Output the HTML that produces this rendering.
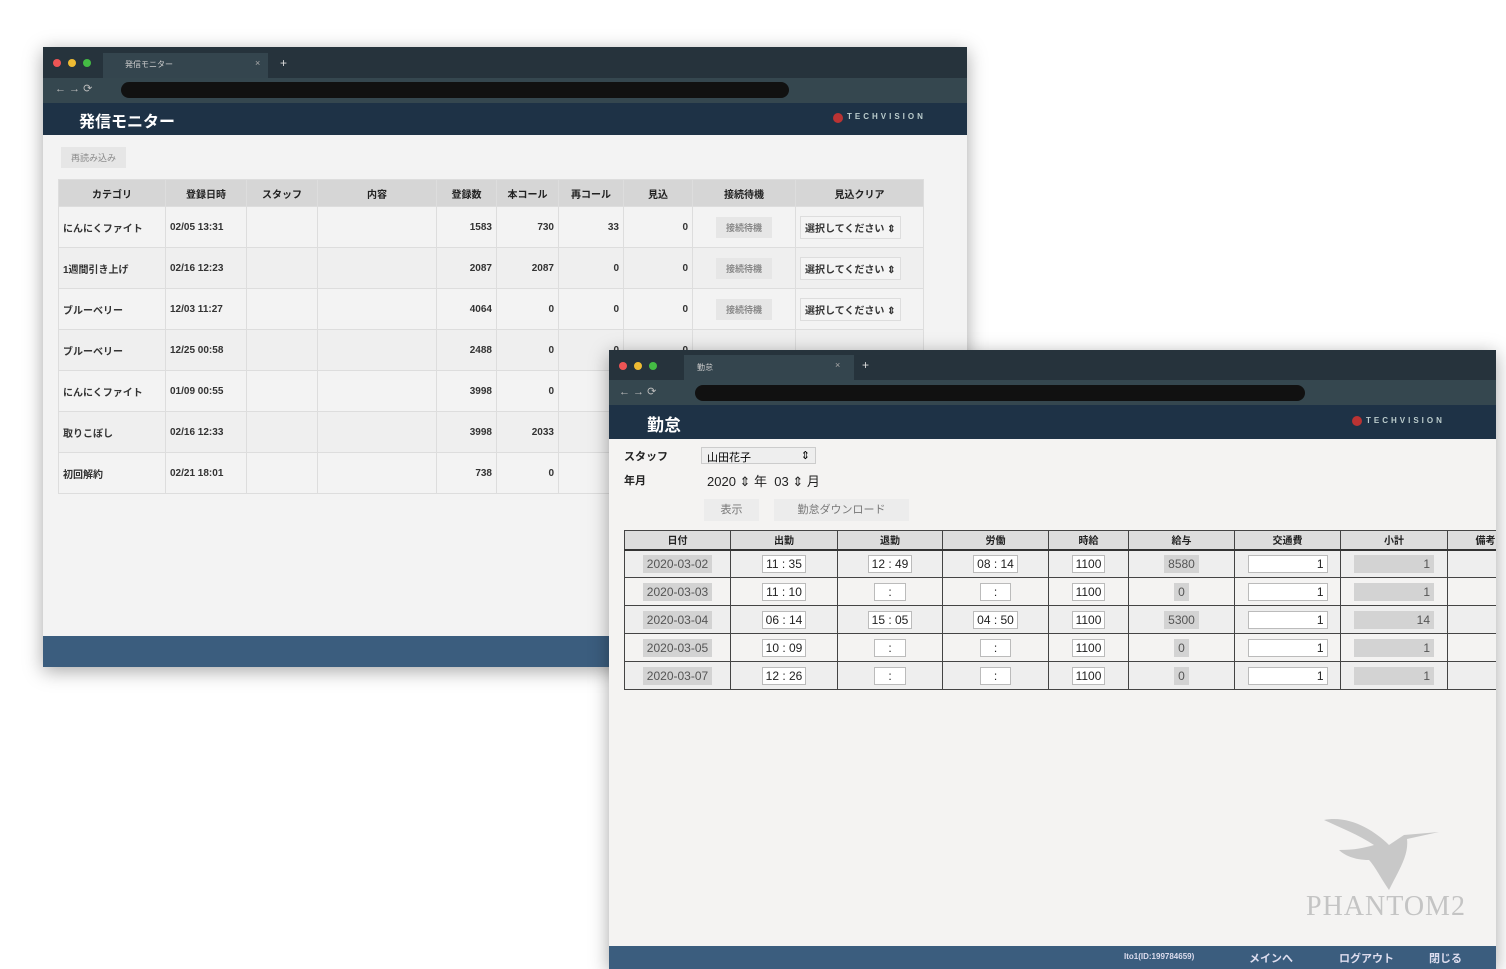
<!DOCTYPE html>
<html><head><meta charset="utf-8"><style>
*{margin:0;padding:0;box-sizing:border-box}
body{width:1506px;height:969px;background:#fff;position:relative;overflow:hidden;font-family:"Liberation Sans","Noto Sans CJK JP",sans-serif}
.a{position:absolute}
.win{position:absolute;box-shadow:0 4px 18px rgba(0,0,0,.35);overflow:hidden}
.tabs{background:#26333c}
.dot{position:absolute;width:8px;height:8px;border-radius:50%}
.addr{background:#35474f}
.hdr{background:#1e3246;color:#fff;font-weight:bold}
table{border-collapse:collapse;position:absolute;font-size:10px;color:#222}
td,th{border:1px solid #ddd;padding:0 4px;white-space:nowrap;overflow:hidden}
.t1 th{background:#d6d6d6;font-size:10px;height:27px}
.t1 td{height:41px;font-weight:bold;color:#333}
.t1 tr:nth-child(odd) td{background:#efefef}
.r{text-align:right}
.btn{display:inline-block;background:#e6e6e6;color:#888;padding:4px 10px;font-size:9px}
.sel{display:inline-block;background:#f4f4f4;border:1px solid #ddd;padding:3px 4px;font-size:10px}
.t2 th{background:#ddd;height:19px;font-size:10px;border:1px solid #444;border-bottom:2px solid #333}
.t2 td{border:1px solid #444;height:28px;text-align:center;font-size:12px}
.t2 tr:nth-child(even) td{background:#eee}
.g{background:#d3d3d3;display:inline-block;padding:2px 4px;color:#555}
.bx{display:inline-block;border:1px solid #bbb;background:#fff;padding:1px 3px}
</style></head><body>

<!-- Window 1 -->
<div class="win" style="left:43px;top:47px;width:924px;height:620px;background:#f3f3f3">
 <div class="a tabs" style="left:0;top:0;width:924px;height:31px"></div>
 <div class="a" style="left:60px;top:6px;width:165px;height:25px;background:#34454e"></div>
 <div class="dot" style="left:10px;top:12px;background:#e55"></div>
 <div class="dot" style="left:25px;top:12px;background:#eb3"></div>
 <div class="dot" style="left:40px;top:12px;background:#4b4"></div>
 <div class="a" style="left:82px;top:12px;color:#ccc;font-size:8px">発信モニター</div>
 <div class="a" style="left:212px;top:11px;color:#aaa;font-size:9px">×</div>
 <div class="a" style="left:237px;top:9px;color:#ddd;font-size:12px">+</div>
 <div class="a addr" style="left:0;top:31px;width:924px;height:25px"></div>
 <div class="a" style="left:12px;top:35px;color:#bbb;font-size:11px">← → ⟳</div>
 <div class="a" style="left:78px;top:35px;width:668px;height:16px;background:#111;border-radius:8px"></div>
 <div class="a hdr" style="left:0;top:56px;width:924px;height:32px"></div>
 <div class="a" style="left:36px;top:61px;color:#fff;font-size:16px;font-weight:bold">発信モニター</div>
 <div class="a" style="left:790px;top:66px;width:10px;height:10px;border-radius:50%;background:#b33"></div>
 <div class="a" style="left:804px;top:65px;color:#bcc;font-size:8px;letter-spacing:3px;font-weight:bold">TECHVISION</div>
 <div class="a btn" style="left:18px;top:100px">再読み込み</div>
 <table class="t1" style="left:15px;top:132px;width:866px">
  <tr><th style="width:107px">カテゴリ</th><th style="width:81px">登録日時</th><th style="width:71px">スタッフ</th><th style="width:119px">内容</th><th style="width:60px">登録数</th><th style="width:62px">本コール</th><th style="width:65px">再コール</th><th style="width:69px">見込</th><th style="width:103px">接続待機</th><th>見込クリア</th></tr>
  <tr><td>にんにくファイト</td><td>02/05 13:31</td><td></td><td></td><td class="r">1583</td><td class="r">730</td><td class="r">33</td><td class="r">0</td><td style="text-align:center"><span class="btn">接続待機</span></td><td><span class="sel">選択してください ⇕</span></td></tr>
  <tr><td>1週間引き上げ</td><td>02/16 12:23</td><td></td><td></td><td class="r">2087</td><td class="r">2087</td><td class="r">0</td><td class="r">0</td><td style="text-align:center"><span class="btn">接続待機</span></td><td><span class="sel">選択してください ⇕</span></td></tr>
  <tr><td>ブルーベリー</td><td>12/03 11:27</td><td></td><td></td><td class="r">4064</td><td class="r">0</td><td class="r">0</td><td class="r">0</td><td style="text-align:center"><span class="btn">接続待機</span></td><td><span class="sel">選択してください ⇕</span></td></tr>
  <tr><td>ブルーベリー</td><td>12/25 00:58</td><td></td><td></td><td class="r">2488</td><td class="r">0</td><td class="r">0</td><td class="r">0</td><td></td><td></td></tr>
  <tr><td>にんにくファイト</td><td>01/09 00:55</td><td></td><td></td><td class="r">3998</td><td class="r">0</td><td></td><td></td><td></td><td></td></tr>
  <tr><td>取りこぼし</td><td>02/16 12:33</td><td></td><td></td><td class="r">3998</td><td class="r">2033</td><td></td><td></td><td></td><td></td></tr>
  <tr><td>初回解約</td><td>02/21 18:01</td><td></td><td></td><td class="r">738</td><td class="r">0</td><td></td><td></td><td></td><td></td></tr>
 </table>
 <div class="a" style="left:0;top:589px;width:924px;height:31px;background:#3b5d7e"></div>
</div>

<!-- Window 2 -->
<div class="win" style="left:609px;top:350px;width:887px;height:619px;background:#f4f3f2">
 <div class="a tabs" style="left:0;top:0;width:887px;height:30px"></div>
 <div class="a" style="left:75px;top:5px;width:170px;height:25px;background:#34454e"></div>
 <div class="dot" style="left:10px;top:12px;background:#e55"></div>
 <div class="dot" style="left:25px;top:12px;background:#eb3"></div>
 <div class="dot" style="left:40px;top:12px;background:#4b4"></div>
 <div class="a" style="left:88px;top:12px;color:#ccc;font-size:8px">勤怠</div>
 <div class="a" style="left:226px;top:10px;color:#aaa;font-size:9px">×</div>
 <div class="a" style="left:253px;top:8px;color:#ddd;font-size:12px">+</div>
 <div class="a addr" style="left:0;top:30px;width:887px;height:25px"></div>
 <div class="a" style="left:10px;top:35px;color:#bbb;font-size:11px">← → ⟳</div>
 <div class="a" style="left:86px;top:35px;width:610px;height:16px;background:#111;border-radius:8px"></div>
 <div class="a hdr" style="left:0;top:55px;width:887px;height:34px"></div>
 <div class="a" style="left:38px;top:61px;color:#fff;font-size:17px;font-weight:bold">勤怠</div>
 <div class="a" style="left:743px;top:66px;width:10px;height:10px;border-radius:50%;background:#b33"></div>
 <div class="a" style="left:757px;top:66px;color:#bcc;font-size:8px;letter-spacing:3px;font-weight:bold">TECHVISION</div>
 <div class="a" style="left:15px;top:98px;font-size:11px;color:#222;font-weight:bold">スタッフ</div>
 <div class="a" style="left:15px;top:122px;font-size:11px;color:#222;font-weight:bold">年月</div>
 <div class="a" style="left:92px;top:97px;width:115px;height:17px;background:#eee;border:1px solid #ccc;font-size:11px;padding:1px 5px">山田花子<span style="float:right">⇕</span></div>
 <div class="a" style="left:98px;top:121px;font-size:13px;color:#222">2020 ⇕ 年 &nbsp;03 ⇕ 月</div>
 <div class="a" style="left:95px;top:149px;width:55px;height:22px;background:#ececec;font-size:11px;color:#777;text-align:center;line-height:22px">表示</div>
 <div class="a" style="left:165px;top:149px;width:135px;height:22px;background:#ececec;font-size:11px;color:#777;text-align:center;line-height:22px">勤怠ダウンロード</div>
 <table class="t2" style="left:15px;top:180px;width:900px">
  <tr><th style="width:106px">日付</th><th style="width:107px">出勤</th><th style="width:105px">退勤</th><th style="width:106px">労働</th><th style="width:80px">時給</th><th style="width:106px">給与</th><th style="width:106px">交通費</th><th style="width:107px">小計</th><th>備考</th></tr>
  <tr><td><span class="g">2020-03-02</span></td><td><span class="bx">11 : 35</span></td><td><span class="bx">12 : 49</span></td><td><span class="bx">08 : 14</span></td><td class="r"><span class="bx">1100</span></td><td class="r"><span class="g">8580</span></td><td class="r"><span class="bx" style="width:80px;text-align:right">1</span></td><td class="r"><span class="g" style="width:80px;text-align:right">1</span></td><td></td></tr>
  <tr><td><span class="g">2020-03-03</span></td><td><span class="bx">11 : 10</span></td><td><span class="bx">&nbsp;&nbsp; : &nbsp;&nbsp;</span></td><td><span class="bx">&nbsp;&nbsp; : &nbsp;&nbsp;</span></td><td class="r"><span class="bx">1100</span></td><td class="r"><span class="g">0</span></td><td class="r"><span class="bx" style="width:80px;text-align:right">1</span></td><td class="r"><span class="g" style="width:80px;text-align:right">1</span></td><td></td></tr>
  <tr><td><span class="g">2020-03-04</span></td><td><span class="bx">06 : 14</span></td><td><span class="bx">15 : 05</span></td><td><span class="bx">04 : 50</span></td><td class="r"><span class="bx">1100</span></td><td class="r"><span class="g">5300</span></td><td class="r"><span class="bx" style="width:80px;text-align:right">1</span></td><td class="r"><span class="g" style="width:80px;text-align:right">14</span></td><td></td></tr>
  <tr><td><span class="g">2020-03-05</span></td><td><span class="bx">10 : 09</span></td><td><span class="bx">&nbsp;&nbsp; : &nbsp;&nbsp;</span></td><td><span class="bx">&nbsp;&nbsp; : &nbsp;&nbsp;</span></td><td class="r"><span class="bx">1100</span></td><td class="r"><span class="g">0</span></td><td class="r"><span class="bx" style="width:80px;text-align:right">1</span></td><td class="r"><span class="g" style="width:80px;text-align:right">1</span></td><td></td></tr>
  <tr><td><span class="g">2020-03-07</span></td><td><span class="bx">12 : 26</span></td><td><span class="bx">&nbsp;&nbsp; : &nbsp;&nbsp;</span></td><td><span class="bx">&nbsp;&nbsp; : &nbsp;&nbsp;</span></td><td class="r"><span class="bx">1100</span></td><td class="r"><span class="g">0</span></td><td class="r"><span class="bx" style="width:80px;text-align:right">1</span></td><td class="r"><span class="g" style="width:80px;text-align:right">1</span></td><td></td></tr>
 </table>
 <svg class="a" style="left:710px;top:465px" width="130" height="80" viewBox="0 0 130 80">
  <path d="M5 5 C30 0 55 15 70 30 L85 20 L120 17 L88 24 C90 40 80 55 70 75 C60 60 55 50 50 45 C35 45 25 40 20 35 C35 35 45 33 55 30 C40 20 20 12 5 5Z" fill="#c8c8c8"/>
 </svg>
 <div class="a" style="left:697px;top:541px;font-family:'Liberation Serif',serif;font-size:28px;color:#c4c4c4;letter-spacing:1px">PHANTOM2</div>
 <div class="a" style="left:0;top:596px;width:887px;height:23px;background:#3b5d7e;color:#dde;font-size:11px;font-weight:bold">
  <span class="a" style="left:515px;top:6px;font-size:8px">Ito1(ID:199784659)</span>
  <span class="a" style="left:640px;top:4px">メインへ</span>
  <span class="a" style="left:730px;top:4px">ログアウト</span>
  <span class="a" style="left:820px;top:4px">閉じる</span>
 </div>
</div>
</body></html>
